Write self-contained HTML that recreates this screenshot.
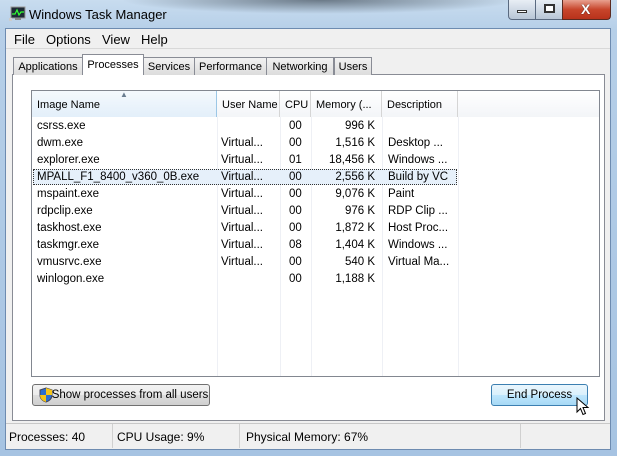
<!DOCTYPE html>
<html><head><style>
*{margin:0;padding:0;box-sizing:border-box}
body{width:617px;height:456px;overflow:hidden;position:relative;font-family:"Liberation Sans",sans-serif;font-size:12px;color:#000;background:#a9c6e3;white-space:nowrap}
.a{position:absolute}
#frame{left:0;top:0;width:617px;height:456px;background:linear-gradient(180deg,#c8dcef 0,#b6cfe8 30px,#a6c3e2 100%)}
#titleshade{left:120px;top:0;width:400px;height:14px;background:radial-gradient(ellipse at 50% 0,rgba(30,40,50,.55),rgba(30,40,50,0) 70%)}
#client{left:5px;top:28px;width:606px;height:422px;background:#f0f0f0;border:1px solid #6d8bb0}
.cap{top:0;height:20px;border:1px solid #5a6a80;border-top:none}
.t{position:absolute;white-space:nowrap}
.tab{position:absolute;top:57px;height:18px;border:1px solid #898c95;border-bottom:none;background:linear-gradient(#f2f2f2,#dcdcdc);padding:3px 0 0 0;text-align:center;font-size:11px;overflow:hidden}
.sel{top:54px;height:21px;background:#fff;z-index:2;padding-top:4px}
#panel{left:12px;top:74px;width:593px;height:347px;background:#fff;border:1px solid #898c95}
#list{left:31px;top:90px;width:569px;height:287px;border:1px solid #828790;background:#fff;overflow:hidden}
.hd{position:absolute;top:0;height:26px;border-right:1px solid #d5d5d5;padding:8px 0 0 5px;background:linear-gradient(#fff,#f3f5f8);font-size:11px;overflow:hidden}
.vl{position:absolute;top:26px;bottom:0;width:1px;background:#eef0f5}
.btn{position:absolute;top:384px;height:22px;border:1px solid #707070;border-radius:3px;background:linear-gradient(#f2f2f2 0,#ebebeb 50%,#dddddd 51%,#cfcfcf 100%);text-align:center;padding-top:4px;font-size:11.5px}
.sb{position:absolute;top:424px;height:24px;padding-top:6px;border-right:1px solid #d0d0d0}
#rows .t{font-size:11.5px}
</style></head><body>
<div id="frame" class="a"></div>
<div id="titleshade" class="a"></div>
<svg class="a" style="left:8px;top:6px" width="18" height="16"><rect x="3" y="1" width="14" height="11" fill="#1e2a36" stroke="#999"/><polyline points="4,8 7,8 9,4 11,9 13,6 16,6" fill="none" stroke="#3f3" stroke-width="1.2"/><rect x="1" y="12" width="3" height="3" fill="#ccc"/><rect x="7" y="12" width="6" height="2" fill="#888"/></svg>
<div class="t" style="left:29px;top:7px;font-size:13px">Windows Task Manager</div>
<div class="a cap" style="left:508px;width:28px;border-radius:0 0 0 4px;background:linear-gradient(#e8eef5,#b8c6d6)"><div class="a" style="left:8px;top:10px;width:10px;height:3px;background:#fff;border:1px solid #333"></div></div>
<div class="a cap" style="left:535px;width:28px;background:linear-gradient(#e8eef5,#b8c6d6)"><div class="a" style="left:8px;top:4px;width:11px;height:9px;border:2px solid #333;background:#fff"></div></div>
<div class="a cap" style="left:562px;width:49px;border-radius:0 0 4px 0;background:linear-gradient(#e8a18f,#c7452b 50%,#b8321b);border-color:#5a2a20"><div class="t" style="left:18px;top:1px;color:#fff;font-weight:bold;font-size:14px;text-shadow:0 0 1px #000">X</div></div>
<div id="client" class="a"></div>
<div class="a" style="left:6px;top:48px;width:604px;height:1px;background:#d8d8d8"></div>
<div class="t" style="left:14px;top:32px;font-size:13px">File</div>
<div class="t" style="left:46px;top:32px;font-size:13px">Options</div>
<div class="t" style="left:102px;top:32px;font-size:13px">View</div>
<div class="t" style="left:141px;top:32px;font-size:13px">Help</div>
<div id="panel" class="a"></div>
<div class="tab" style="left:13px;width:70px">Applications</div>
<div class="tab sel" style="left:82px;width:62px">Processes</div>
<div class="tab" style="left:143px;width:52px">Services</div>
<div class="tab" style="left:194px;width:73px">Performance</div>
<div class="tab" style="left:266px;width:68px">Networking</div>
<div class="tab" style="left:334px;width:38px">Users</div>
<div id="list" class="a">
<div class="hd" style="left:0;width:185px;border-right-color:#9cc7e6;background:linear-gradient(#f4f9fd,#e3effa)">Image Name</div>
<div class="t" style="left:88px;top:-1px;font-size:8px;color:#6a7d90">▲</div>
<div class="hd" style="left:185px;width:63px">User Name</div>
<div class="hd" style="left:248px;width:31px">CPU</div>
<div class="hd" style="left:279px;width:71px">Memory (...</div>
<div class="hd" style="left:350px;width:76px">Description</div>
<div class="hd" style="left:426px;width:141px;border-right:none"></div>
<div class="vl" style="left:185px"></div><div class="vl" style="left:248px"></div><div class="vl" style="left:279px"></div><div class="vl" style="left:350px"></div><div class="vl" style="left:426px"></div>
<div class="a" style="left:1px;top:78px;width:424px;height:16px;background:#e6f0fa;border:1px dotted #333"></div>
</div>
<div id="rows"></div>
<script>
var d=[["csrss.exe","","00","996 K",""],["dwm.exe","Virtual...","00","1,516 K","Desktop ..."],["explorer.exe","Virtual...","01","18,456 K","Windows ..."],["MPALL_F1_8400_v360_0B.exe","Virtual...","00","2,556 K","Build by VC"],["mspaint.exe","Virtual...","00","9,076 K","Paint"],["rdpclip.exe","Virtual...","00","976 K","RDP Clip ..."],["taskhost.exe","Virtual...","00","1,872 K","Host Proc..."],["taskmgr.exe","Virtual...","08","1,404 K","Windows ..."],["vmusrvc.exe","Virtual...","00","540 K","Virtual Ma..."],["winlogon.exe","","00","1,188 K",""]];
var h="";d.forEach(function(r,i){var y=120+i*17;
h+='<div class="t" style="left:37px;top:'+y+'px">'+r[0]+'</div><div class="t" style="left:221px;top:'+y+'px">'+r[1]+'</div><div class="t" style="left:289px;top:'+y+'px">'+r[2]+'</div><div class="t" style="right:242px;top:'+y+'px">'+r[3]+'</div><div class="t" style="left:388px;top:'+y+'px">'+r[4]+'</div>';});
document.getElementById("rows").innerHTML=h;
</script>
<div class="btn" style="left:32px;width:178px;padding-left:18px">Show processes from all users</div>
<svg class="a" style="left:39px;top:387px" width="14" height="16"><path d="M7 1 L13 3 L13 8 Q13 13 7 15 Q1 13 1 8 L1 3 Z" fill="#2a6fd0" stroke="#445"/><path d="M7 1 L13 3 L13 8 L7 8 Z" fill="#f5c518"/><path d="M1 8 L7 8 L7 15 Q1 13 1 8Z" fill="#f5c518"/></svg>
<div class="btn" style="left:491px;width:97px;border-color:#3c7fb1;background:linear-gradient(#eaf6fd 0,#d9f0fc 50%,#bee6fd 51%,#a7d9f5 100%)">End Process</div>
<svg class="a" style="left:576px;top:397px" width="14" height="20"><path d="M1 1 L1 15 L4.5 11.5 L7 17.5 L9.5 16.5 L7 10.5 L12 10.5 Z" fill="#fff" stroke="#000"/></svg>
<div class="a" style="left:6px;top:423px;width:604px;height:1px;background:#c8c8c8"></div>
<div class="sb" style="left:6px;width:107px;padding-left:3px">Processes: 40</div>
<div class="sb" style="left:113px;width:127px;padding-left:4px">CPU Usage: 9%</div>
<div class="sb" style="left:240px;width:281px;padding-left:6px">Physical Memory: 67%</div>
</body></html>
